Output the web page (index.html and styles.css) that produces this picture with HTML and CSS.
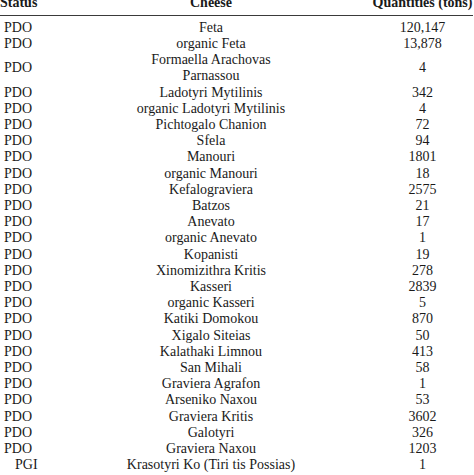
FILE: index.html
```html
<!DOCTYPE html>
<html>
<head>
<meta charset="utf-8">
<link rel="stylesheet" href="styles.css">
</head>
<body>
<table class="cheese-table">
  <colgroup>
    <col class="c-status">
    <col class="c-name">
    <col class="c-qty">
  </colgroup>
  <thead>
    <tr>
      <th class="status">Status</th>
      <th>Cheese</th>
      <th class="qty">Quantities (tons)</th>
    </tr>
  </thead>
  <tbody>
    <tr class="first"><td class="status">PDO</td><td>Feta</td><td>120,147</td></tr>
    <tr><td class="status">PDO</td><td>organic Feta</td><td>13,878</td></tr>
    <tr><td class="status">PDO</td><td>Formaella Arachovas<br>Parnassou</td><td>4</td></tr>
    <tr><td class="status">PDO</td><td>Ladotyri Mytilinis</td><td>342</td></tr>
    <tr><td class="status">PDO</td><td>organic Ladotyri Mytilinis</td><td>4</td></tr>
    <tr><td class="status">PDO</td><td>Pichtogalo Chanion</td><td>72</td></tr>
    <tr><td class="status">PDO</td><td>Sfela</td><td>94</td></tr>
    <tr><td class="status">PDO</td><td>Manouri</td><td>1801</td></tr>
    <tr><td class="status">PDO</td><td>organic Manouri</td><td>18</td></tr>
    <tr><td class="status">PDO</td><td>Kefalograviera</td><td>2575</td></tr>
    <tr><td class="status">PDO</td><td>Batzos</td><td>21</td></tr>
    <tr><td class="status">PDO</td><td>Anevato</td><td>17</td></tr>
    <tr><td class="status">PDO</td><td>organic Anevato</td><td>1</td></tr>
    <tr><td class="status">PDO</td><td>Kopanisti</td><td>19</td></tr>
    <tr><td class="status">PDO</td><td>Xinomizithra Kritis</td><td>278</td></tr>
    <tr><td class="status">PDO</td><td>Kasseri</td><td>2839</td></tr>
    <tr><td class="status">PDO</td><td>organic Kasseri</td><td>5</td></tr>
    <tr><td class="status">PDO</td><td>Katiki Domokou</td><td>870</td></tr>
    <tr><td class="status">PDO</td><td>Xigalo Siteias</td><td>50</td></tr>
    <tr><td class="status">PDO</td><td>Kalathaki Limnou</td><td>413</td></tr>
    <tr><td class="status">PDO</td><td>San Mihali</td><td>58</td></tr>
    <tr><td class="status">PDO</td><td>Graviera Agrafon</td><td>1</td></tr>
    <tr><td class="status">PDO</td><td>Arseniko Naxou</td><td>53</td></tr>
    <tr><td class="status">PDO</td><td>Graviera Kritis</td><td>3602</td></tr>
    <tr><td class="status">PDO</td><td>Galotyri</td><td>326</td></tr>
    <tr><td class="status">PDO</td><td>Graviera Naxou</td><td>1203</td></tr>
    <tr><td class="status pgi">PGI</td><td>Krasotyri Ko (Tiri tis Possias)</td><td>1</td></tr>
  </tbody>
</table>
</body>
</html>
```

FILE: styles.css
```css
html, body {
  margin: 0;
  padding: 0;
  background: #ffffff;
}

.cheese-table {
  border-collapse: collapse;
  table-layout: fixed;
  width: 473px;
  margin-top: -5px;
  font-family: "Liberation Serif", "Times New Roman", serif;
  font-size: 14px;
  line-height: 16.2px;
  color: #1a1a1a;
}

.c-status { width: 50px; }
.c-name { width: 322px; }
.c-qty { width: 101px; }

.cheese-table th {
  font-weight: bold;
  padding: 0 0 4px 0;
  border-bottom: 1px solid #3a3a3a;
  white-space: nowrap;
  text-align: center;
}

.cheese-table th.status {
  text-align: left;
  padding-left: 0;
}

.cheese-table th.qty {
  overflow: visible;
}

.cheese-table td {
  padding: 0;
  text-align: center;
  white-space: nowrap;
  vertical-align: middle;
}

.cheese-table tr.first td {
  padding-top: 3.5px;
}

.cheese-table td.status {
  text-align: left;
  padding-left: 4px;
}

.cheese-table td.pgi {
  padding-left: 15px;
}
```
